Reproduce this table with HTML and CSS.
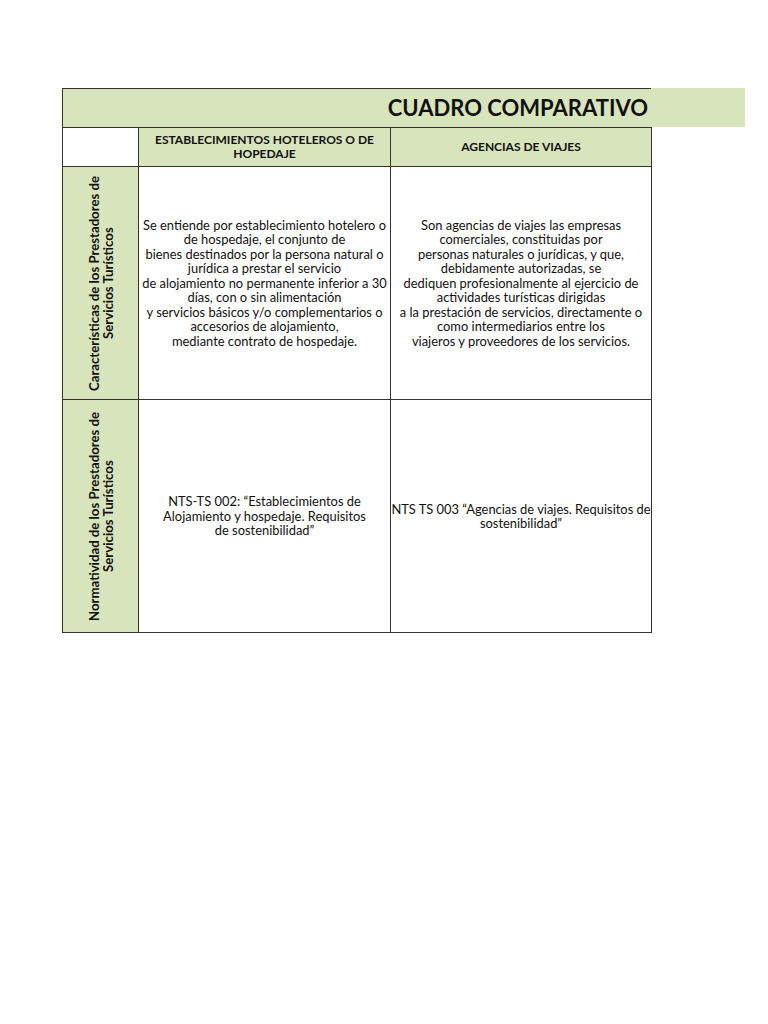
FILE: index.html
```html
<!DOCTYPE html>
<html lang="es">
<head>
<meta charset="utf-8">
<title>Cuadro comparativo</title>
<link rel="stylesheet" href="styles.css">
</head>
<body>
<div class="sheet">
  <div class="title-row">
    <div class="title-cell">CUADRO COMPARATIVO</div>
    <div class="title-ext"></div>
  </div>
  <table class="grid">
    <colgroup>
      <col class="c1">
      <col class="c2">
      <col class="c3">
    </colgroup>
    <tr class="head">
      <td class="blank"></td>
      <td class="hcell">ESTABLECIMIENTOS HOTELEROS O DE<br>HOPEDAJE</td>
      <td class="hcell">AGENCIAS DE VIAJES</td>
    </tr>
    <tr class="body-row">
      <td class="side"><div class="vert">Características de los Prestadores de<br>Servicios Turísticos</div></td>
      <td class="text">Se entiende por establecimiento hotelero o<br>de hospedaje, el conjunto de<br>bienes destinados por la persona natural o<br>jurídica a prestar el servicio<br>de alojamiento no permanente inferior a 30<br>días, con o sin alimentación<br>y servicios básicos y/o complementarios o<br>accesorios de alojamiento,<br>mediante contrato de hospedaje.</td>
      <td class="text">Son agencias de viajes las empresas<br>comerciales, constituidas por<br>personas naturales o jurídicas, y que,<br>debidamente autorizadas, se<br>dediquen profesionalmente al ejercicio de<br>actividades turísticas dirigidas<br>a la prestación de servicios, directamente o<br>como intermediarios entre los<br>viajeros y proveedores de los servicios.</td>
    </tr>
    <tr class="body-row">
      <td class="side"><div class="vert">Normatividad de los Prestadores de<br>Servicios Turísticos</div></td>
      <td class="text">NTS-TS 002: “Establecimientos de<br>Alojamiento y hospedaje. Requisitos<br>de sostenibilidad”</td>
      <td class="text">NTS TS 003 “Agencias de viajes. Requisitos de<br>sostenibilidad”</td>
    </tr>
  </table>
</div>
</body>
</html>
```
FILE: styles.css
```css
html, body {
  margin: 0;
  padding: 0;
  background: #ffffff;
}

body {
  font-family: Lato, "Open Sans", "Liberation Sans", sans-serif;
  color: #111111;
}

.sheet {
  padding: 88px 0 0 62px;
}

.title-row {
  display: flex;
  width: 683px;
  height: 39px;
  background: #d8e4bc;
}

.title-cell {
  box-sizing: border-box;
  width: 589px;
  height: 39px;
  border-top: 1px solid #333333;
  border-left: 1px solid #333333;
  text-align: right;
  padding-right: 3px;
  font-size: 22px;
  font-weight: 700;
  line-height: 37px;
  color: #111111;
  white-space: nowrap;
}

.title-ext {
  flex: 1;
}

.grid {
  border-collapse: collapse;
  table-layout: fixed;
  width: 589px;
}

.c1 { width: 76px; }
.c2 { width: 252px; }
.c3 { width: 261px; }

.grid td {
  border: 1px solid #333333;
  padding: 0;
  text-align: center;
  vertical-align: middle;
  white-space: nowrap;
}

.head td {
  height: 38px;
}

.hcell {
  background: #d8e4bc;
  font-size: 12px;
  font-weight: 700;
  line-height: 14px;
}

.body-row td {
  height: 232px;
}

.side {
  background: #d8e4bc;
}

.vert {
  writing-mode: vertical-rl;
  transform: rotate(180deg);
  margin: 0 auto;
  font-size: 13.2px;
  font-weight: 700;
  line-height: 14px;
  text-align: center;
}

.text {
  font-size: 12.9px;
  line-height: 14.5px;
}
```
